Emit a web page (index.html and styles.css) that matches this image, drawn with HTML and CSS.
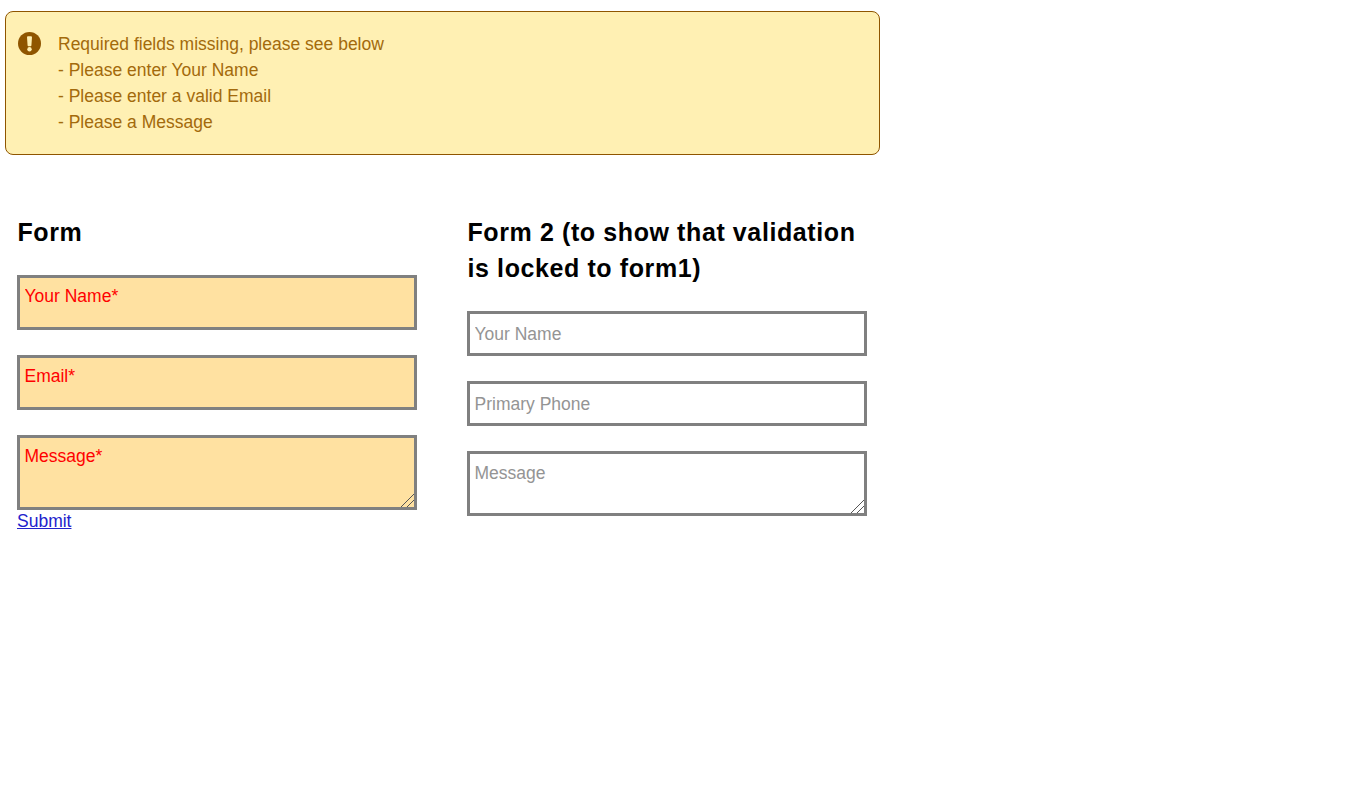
FILE: index.html
```html
<!DOCTYPE html>
<html lang="en">
<head>
    <meta charset="UTF-8">
    <meta name="viewport" content="width=device-width, initial-scale=1.0">
    <title>Form validation</title>
    <link rel="stylesheet" href="styles.css">
</head>
<body>

<div class="alert">
    <svg class="alert-icon" viewBox="0 0 24 24" width="23" height="23" aria-hidden="true">
        <circle cx="12" cy="12" r="12" fill="#8f5500"/>
        <path d="M9.4 5.6c0-.7.5-1.2 1.2-1.2h2.8c.7 0 1.2.5 1.2 1.2l-.6 8.2c0 .6-.5 1-1.1 1h-1.8c-.6 0-1.1-.4-1.1-1z" fill="#fff0b3"/>
        <circle cx="12" cy="18" r="2.3" fill="#fff0b3"/>
    </svg>
    <div class="alert-text">
        Required fields missing, please see below<br>
        - Please enter Your Name<br>
        - Please enter a valid Email<br>
        - Please a Message
    </div>
</div>

<div class="forms">
    <form class="form invalid">
        <h2>Form</h2>
        <input type="text" placeholder="Your Name*">
        <input type="text" placeholder="Email*">
        <textarea placeholder="Message*"></textarea>
        <a href="#" class="submit">Submit</a>
    </form>

    <form class="form">
        <h2>Form 2 (to show that validation is locked to form1)</h2>
        <input type="text" placeholder="Your Name">
        <input type="text" placeholder="Primary Phone">
        <textarea placeholder="Message"></textarea>
    </form>
</div>

</body>
</html>
```

FILE: styles.css
```css
body {
    font-family: "Liberation Sans", Arial, sans-serif;
    font-size: 17.5px;
    line-height: 26px;
    background-color: #fff;
    margin: 0;
    padding: 11px 0 0 5px;
}
.alert {
    display: flex;
    box-sizing: border-box;
    width: 875px;
    height: 144px;
    padding: 19px 12px 0;
    background-color: #fff0b3;
    border: 1px solid #8f5500;
    border-radius: 8px;
    color: #a36a0c;
}
.alert-icon {
    flex: none;
    margin: 1px 17px 0 0;
}
.forms {
    display: flex;
    gap: 50px;
    padding: 59px 0 0 12px;
}
.form {
    width: 400px;
}
.form h2 {
    font-size: 25px;
    line-height: 36px;
    letter-spacing: 0.6px;
    font-weight: bold;
    color: #000;
    margin: 0 0 25px;
    padding-left: 0.5px;
}
.form input, .form textarea {
    display: block;
    box-sizing: border-box;
    width: 400px;
    height: 45px;
    margin: 0 0 25px;
    padding: 2px 4.5px 0;
    font-family: "Liberation Sans", Arial, sans-serif;
    font-size: 17.5px;
    line-height: 26px;
    background-color: #fff;
    border: 3px solid #808080;
    border-radius: 0;
    outline: none;
}
.form textarea {
    height: 65px;
    margin-bottom: 0;
    padding-top: 6px;
}
.form textarea::-webkit-resizer {
    background: linear-gradient(135deg, transparent 55%, #555 55%, #555 59%, transparent 59%, transparent 75%, #555 75%, #555 79%, transparent 79%);
}
.form ::placeholder {
    color: #949494;
    opacity: 1;
}
.invalid input, .invalid textarea {
    background-color: #ffe1a1;
}
.invalid input {
    height: 55px;
    padding: 0 4.5px 12px;
}
.invalid textarea {
    height: 75px;
    padding-top: 5px;
}
.invalid ::placeholder {
    color: #f00;
}
.submit {
    display: block;
    line-height: 22px;
    color: #2222cc;
}
```
